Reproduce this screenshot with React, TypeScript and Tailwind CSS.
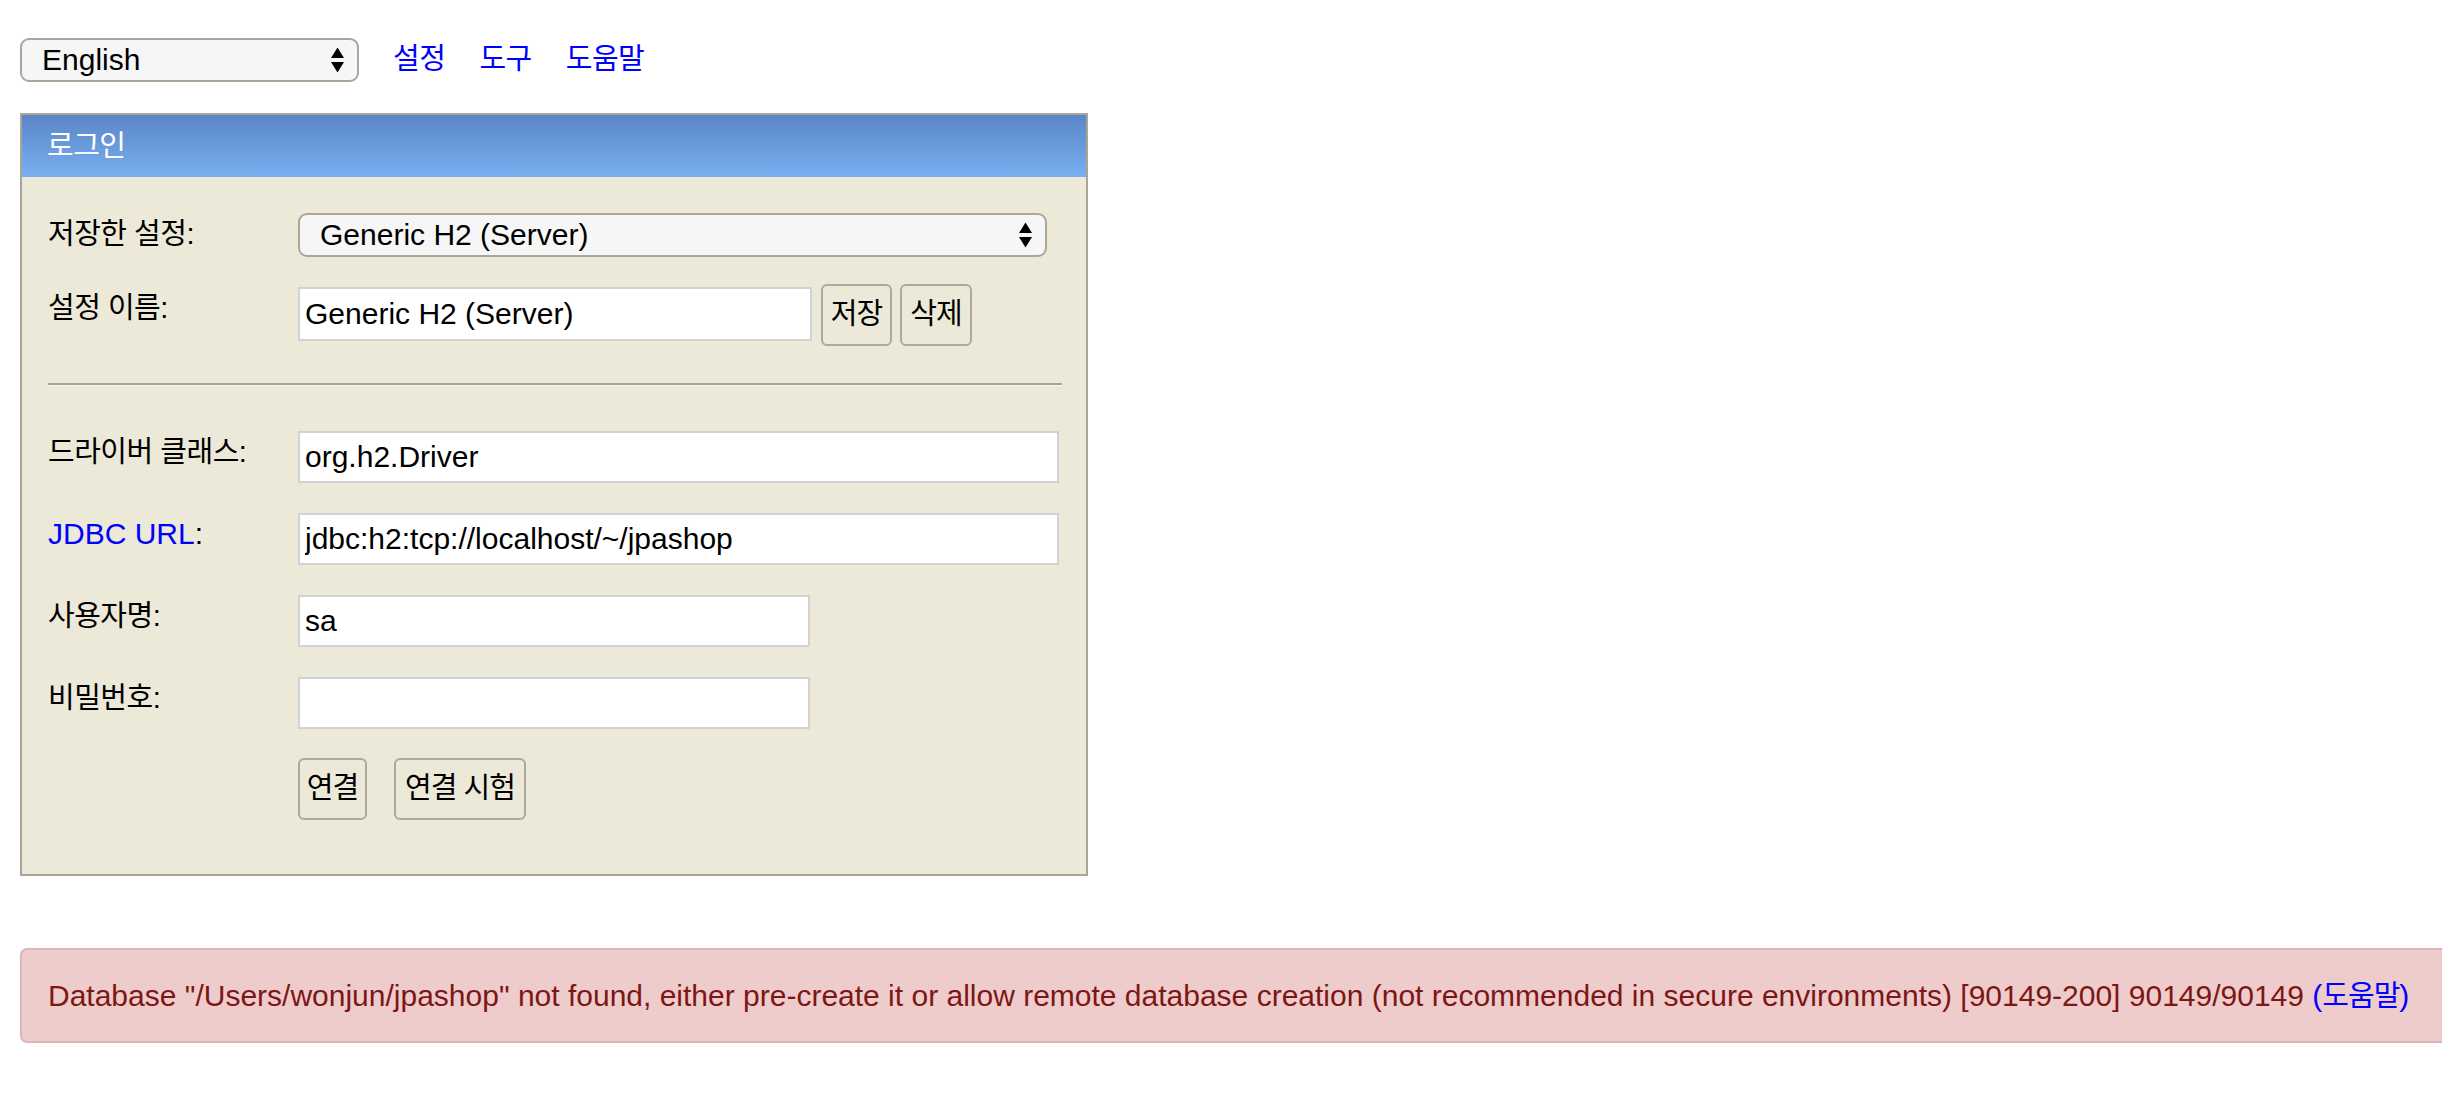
import { useState } from 'react';

const font = 'font-["Liberation_Sans","Noto_Sans_CJK_KR",sans-serif]';
const ko = 'text-[29px] tracking-[-0.5px]';

function Arrows() {
  return (
    <svg width="13" height="25" viewBox="0 0 13 25" className="pointer-events-none absolute right-[13px] top-1/2 -translate-y-1/2">
      <polygon points="6.5,0 13,10.5 0,10.5" fill="#000" />
      <polygon points="0,14.5 13,14.5 6.5,25" fill="#000" />
    </svg>
  );
}

function FakeSelect({ value, width }: { value: string; width: string }) {
  return (
    <div className={`relative ${width} h-[44px] rounded-[9px] border-2 border-[#aaa699] bg-[#f6f6f6]`}>
      <div className="pl-[20px] text-[30px] leading-[40px] text-black">{value}</div>
      <Arrows />
    </div>
  );
}

function Field({ label, value, width, blue }: { label: React.ReactNode; value: string; width: string; blue?: boolean }) {
  return (
    <div className="flex items-start">
      <div className={`w-[250px] pt-[4px] leading-[34px] ${blue ? 'text-[30px]' : ko}`}>{label}</div>
      <input
        type="text"
        defaultValue={value}
        className={`${width} h-[52px] border-2 border-[#d2d2d2] bg-white px-[5px] text-[30px] text-black outline-none`}
      />
    </div>
  );
}

function Btn({ children, width }: { children: React.ReactNode; width: string }) {
  return (
    <button type="button" className={`${width} h-[62px] rounded-[6px] border-2 border-[#ada99d] bg-[#ece9d8] text-[29px] tracking-[-1px] text-black`}>
      {children}
    </button>
  );
}

export default function App() {
  const [lang] = useState('English');

  return (
    <div className={`${font} min-h-screen w-full overflow-hidden bg-white text-black`}>
      <div className="flex items-center pl-[20px] pt-[38px]">
        <FakeSelect value={lang} width="w-[339px]" />
        <div className={`ml-[34px] flex gap-[34px] text-[#0000ff] ${ko}`}>
          <a href="#">설정</a>
          <a href="#">도구</a>
          <a href="#">도움말</a>
        </div>
      </div>

      <div className="ml-[20px] mt-[31px] w-[1068px] border-2 border-[#aaa697] bg-[#ece9d8]">
        <div className={`h-[62px] bg-gradient-to-b from-[#5a86c9] to-[#79aff0] pl-[25px] leading-[62px] text-white ${ko}`}>로그인</div>

        <div className="pb-[54px] pl-[26px] pt-[36px]">
          <div className="flex items-center">
            <div className={`w-[250px] ${ko}`}>저장한 설정:</div>
            <FakeSelect value="Generic H2 (Server)" width="w-[749px]" />
          </div>

          <div className="mt-[27px] flex items-start">
            <div className={`w-[250px] pt-[7px] leading-[34px] ${ko}`}>설정 이름:</div>
            <input
              type="text"
              defaultValue="Generic H2 (Server)"
              className="mt-[3px] h-[54px] w-[514px] border-2 border-[#d2d2d2] bg-white px-[5px] text-[30px] text-black outline-none"
            />
            <div className="ml-[9px] flex gap-[8px]">
              <Btn width="w-[71px]">저장</Btn>
              <Btn width="w-[72px]">삭제</Btn>
            </div>
          </div>

          <div className="mt-[37px] mr-[24px] h-[3px] border-t-2 border-b border-t-[#a6a39a] border-b-[#f8f7f2]" />

          <div className="mt-[45px] flex flex-col gap-[30px]">
            <Field label="드라이버 클래스:" value="org.h2.Driver" width="w-[761px]" />
            <Field
              blue
              label={<><span className="text-[#0000ff]">JDBC URL</span>:</>}
              value="jdbc:h2:tcp://localhost/~/jpashop"
              width="w-[761px]"
            />
            <Field label="사용자명:" value="sa" width="w-[512px]" />
            <Field label="비밀번호:" value="" width="w-[512px]" />
          </div>

          <div className="mt-[29px] flex gap-[27px] pl-[250px]">
            <Btn width="w-[69px]">연결</Btn>
            <Btn width="w-[132px]">연결 시험</Btn>
          </div>
        </div>
      </div>

      <div className="ml-[20px] mt-[72px] flex h-[95px] w-[2440px] items-center rounded-[7px] border-2 border-[#ddb7b7] bg-[#eecccc] pl-[26px] text-[30px] text-[#7e1616]">
        <span>
          Database "/Users/wonjun/jpashop" not found, either pre-create it or allow remote database creation (not recommended in secure environments) [90149-200] 90149/90149{' '}
          <a href="#" className="text-[#0000ff]">(<span className="text-[29px] tracking-[-1px]">도움말</span>)</a>
        </span>
      </div>
    </div>
  );
}
